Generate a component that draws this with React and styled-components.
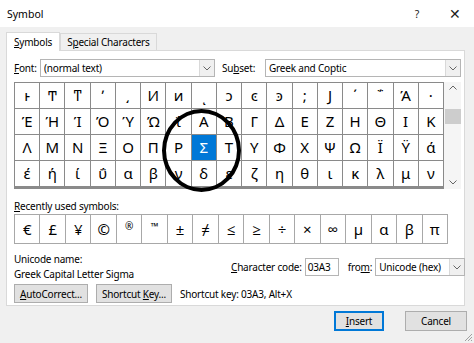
import styled, { createGlobalStyle, css } from "styled-components";

const Global = createGlobalStyle`
  html, body {
    margin: 0;
    padding: 0;
    background: #f0f0f0;
  }
  body {
    font-family: "Noto Sans", "Open Sans", "DejaVu Sans", sans-serif;
    font-size: 10px;
    letter-spacing: -0.2px;
    color: #000;
  }
`;

const Window = styled.div`
  position: relative;
  width: 474px;
  height: 343px;
  overflow: hidden;
  background: #f0f0f0;
  display: flex;
  flex-direction: column;
`;

const TitleBar = styled.div`
  height: 27px;
  background: #fff;
  display: flex;
  align-items: center;
  padding: 0 0 0 7px;
`;

const Title = styled.div`
  flex: 1;
  font-size: 10.5px;
  letter-spacing: 0;
`;

const TitleButton = styled.div`
  width: 38px;
  text-align: center;
  font-size: ${(p) => (p.$big ? "14px" : "10.5px")};
  font-weight: ${(p) => (p.$big ? 300 : 400)};
  color: #222;
`;

const Body = styled.div`
  padding: 5px 0 0 6px;
  display: flex;
  flex-direction: column;
`;

const Tabs = styled.div`
  display: flex;
  height: 18px;
  align-items: flex-end;
`;

const Tab = styled.div`
  box-sizing: border-box;
  height: ${(p) => (p.$active ? "19px" : "17px")};
  padding: 0 ${(p) => (p.$active ? 7 : 6)}px;
  display: flex;
  align-items: center;
  border: 1px solid #d9d9d9;
  border-bottom: none;
  background: ${(p) => (p.$active ? "#fff" : "#f0f0f0")};
  margin-bottom: ${(p) => (p.$active ? "-1px" : "0")};
  position: relative;
  z-index: ${(p) => (p.$active ? 1 : 0)};
`;

const Panel = styled.div`
  box-sizing: border-box;
  width: 459px;
  height: 256px;
  background: #fff;
  border: 1px solid #d9d9d9;
  padding: 8px 3px 0 7px;
  display: flex;
  flex-direction: column;
`;

const Row = styled.div`
  display: flex;
  align-items: center;
`;

const Label = styled.span`
  white-space: nowrap;
  box-sizing: border-box;
  width: ${(p) => (p.$w ? `${p.$w}px` : "auto")};
  padding-left: ${(p) => p.$pl || 0}px;
  flex: none;
`;

const Key = styled.span`
  text-decoration: underline;
`;

const Combo = styled.div`
  box-sizing: border-box;
  height: 18px;
  width: ${(p) => p.$w}px;
  border: 1px solid #b5b5b5;
  background: #fff;
  display: flex;
  align-items: center;
  padding-left: 3px;
  flex: none;
`;

const ComboText = styled.span`
  flex: 1;
  white-space: nowrap;
  overflow: hidden;
`;

const ComboButton = styled.div`
  width: 14px;
  height: 16px;
  border-left: 1px solid #d9d9d9;
  background: #f0f0f0;
  display: flex;
  align-items: center;
  justify-content: center;
`;

const GridArea = styled.div`
  position: relative;
  display: flex;
  margin-top: 5px;
`;

const CharGrid = styled.div`
  display: grid;
  grid-template-columns: repeat(17, 1fr);
  grid-auto-rows: ${(p) => p.$row}px;
  gap: 1px;
  width: ${(p) => p.$w}px;
  box-sizing: border-box;
  background: ${(p) => p.$line};
  border: 1px solid ${(p) => p.$line};
  letter-spacing: 0;
  ${(p) =>
    p.$double &&
    css`
      border-bottom: 3px double #8a8a8a;
    `}
`;

const Cell = styled.div`
  background: ${(p) => (p.$sel ? "#0078d7" : "#fff")};
  color: ${(p) => (p.$sel ? "#fff" : "#000")};
  display: flex;
  align-items: center;
  justify-content: center;
  font-size: ${(p) => p.$size || 15}px;
  line-height: 1;
  padding-bottom: ${(p) => (p.$raise ? 6 : 0)}px;
`;

const Scrollbar = styled.div`
  width: 17px;
  background: #f5f5f5;
  display: flex;
  flex-direction: column;
  align-items: center;
  padding: 3px 0 4px;
  box-sizing: border-box;
`;

const Thumb = styled.div`
  width: 16px;
  height: 15px;
  background: #cdcdcd;
  margin-top: 19px;
  margin-bottom: auto;
`;

const Circle = styled.div`
  position: absolute;
  left: 148px;
  top: 27px;
  width: 79px;
  height: 83px;
  box-sizing: border-box;
  border: 4px solid #000;
  border-radius: 50%;
  pointer-events: none;
`;

const SectionLabel = styled.div`
  margin-top: ${(p) => p.$mt || 0}px;
  margin-bottom: ${(p) => p.$mb || 0}px;
  line-height: 14px;
  white-space: nowrap;
`;

const InfoRow = styled.div`
  display: flex;
  margin-top: 8px;
`;

const InfoLeft = styled.div`
  width: 217px;
  flex: none;
  display: flex;
  flex-direction: column;
  gap: 1px;
`;

const InfoRight = styled.div`
  display: flex;
  align-items: center;
  gap: 3px;
  padding-top: 6px;
  height: 18px;
`;

const CodeBox = styled.div`
  box-sizing: border-box;
  width: 34px;
  height: 18px;
  border: 1px solid #b5b5b5;
  padding-left: 2px;
  display: flex;
  align-items: center;
  margin-right: 6px;
`;

const Button = styled.div`
  box-sizing: border-box;
  width: ${(p) => p.$w}px;
  height: ${(p) => p.$h || 19}px;
  background: #e1e1e1;
  border: 1px solid ${(p) => (p.$default ? "#0078d7" : "#adadad")};
  box-shadow: ${(p) => (p.$default ? "inset 0 0 0 1px #0078d7" : "none")};
  display: flex;
  align-items: center;
  justify-content: center;
  white-space: nowrap;
  flex: none;
`;

const ButtonRow = styled.div`
  display: flex;
  align-items: center;
  gap: 8px;
  margin-top: 3px;
`;

const Footer = styled.div`
  display: flex;
  justify-content: flex-end;
  gap: 21px;
  padding-right: 7px;
  margin-top: 5px;
`;

const Grip = styled.svg`
  position: absolute;
  right: 1px;
  bottom: 1px;
`;

const Chevron = ({ up }) => (
  <svg width="8" height="5" viewBox="0 0 8 5">
    <path
      d={up ? "M0.5 4.5 L4 1 L7.5 4.5" : "M0.5 0.5 L4 4 L7.5 0.5"}
      fill="none"
      stroke="#666"
      strokeWidth="1"
    />
  </svg>
);

const rows = [
  "ͱͲͳʹ͵Ͷͷͺͻͼͽ;Ϳ΄΅Ά·",
  "ΈΉΊΌΎΏΐΑΒΓΔΕΖΗΘΙΚ",
  "ΛΜΝΞΟΠΡΣΤΥΦΧΨΩΪΫά",
  "έήίΰαβγδεζηθικλμν",
];

const recent = ["€", "£", "¥", "©", "®", "™", "±", "≠", "≤", "≥", "÷", "×", "∞", "µ", "α", "β", "π"];

export default function App() {
  return (
    <Window>
      <Global />
      <TitleBar>
        <Title>Symbol</Title>
        <TitleButton>?</TitleButton>
        <TitleButton $big>✕</TitleButton>
      </TitleBar>
      <Body>
        <Tabs>
          <Tab $active>
            <span>
              <Key>S</Key>ymbols
            </span>
          </Tab>
          <Tab>
            <span>
              S<Key>p</Key>ecial Characters
            </span>
          </Tab>
        </Tabs>
        <Panel>
          <Row>
            <Label $w={26}>
              <Key>F</Key>ont:
            </Label>
            <Combo $w={175}>
              <ComboText>(normal text)</ComboText>
              <ComboButton>
                <Chevron />
              </ComboButton>
            </Combo>
            <Label $w={50} $pl={7}>
              Su<Key>b</Key>set:
            </Label>
            <Combo $w={196}>
              <ComboText>Greek and Coptic</ComboText>
              <ComboButton>
                <Chevron />
              </ComboButton>
            </Combo>
          </Row>
          <GridArea>
            <CharGrid $w={430} $row={25} $line="#8a8a8a" $double>
              {rows.map((r, ri) =>
                Array.from(r).map((ch, ci) => (
                  <Cell key={`${ri}-${ci}`} $sel={ri === 2 && ci === 7}>
                    {ch}
                  </Cell>
                ))
              )}
            </CharGrid>
            <Scrollbar>
              <Chevron up />
              <Thumb />
              <Chevron />
            </Scrollbar>
            <Circle />
          </GridArea>
          <SectionLabel $mt={10} $mb={1}>
            <Key>R</Key>ecently used symbols:
          </SectionLabel>
          <CharGrid $w={434} $row={28} $line="#a8a8a8">
            {recent.map((ch, i) => {
              const small = ch === "®" || ch === "™";
              return (
                <Cell key={i} $size={small ? 10 : 15} $raise={small}>
                  {ch}
                </Cell>
              );
            })}
          </CharGrid>
          <InfoRow>
            <InfoLeft>
              <SectionLabel>Unicode name:</SectionLabel>
              <SectionLabel>Greek Capital Letter Sigma</SectionLabel>
            </InfoLeft>
            <InfoRight>
              <Label>
                <Key>C</Key>haracter code:
              </Label>
              <CodeBox>03A3</CodeBox>
              <Label>
                fro<Key>m</Key>:
              </Label>
              <Combo $w={90}>
                <ComboText>Unicode (hex)</ComboText>
                <ComboButton>
                  <Chevron />
                </ComboButton>
              </Combo>
            </InfoRight>
          </InfoRow>
          <ButtonRow>
            <Button $w={74}>
              <span>
                <Key>A</Key>utoCorrect...
              </span>
            </Button>
            <Button $w={76}>
              <span>
                Shortcut <Key>K</Key>ey...
              </span>
            </Button>
            <Label>Shortcut key: 03A3, Alt+X</Label>
          </ButtonRow>
        </Panel>
        <Footer>
          <Button $w={50} $h={20} $default>
            <span>
              <Key>I</Key>nsert
            </span>
          </Button>
          <Button $w={62} $h={20}>
            Cancel
          </Button>
        </Footer>
      </Body>
      <Grip width="10" height="10" viewBox="0 0 10 10">
        <path d="M9 2 L2 9 M9 5 L5 9 M9 8 L8 9" stroke="#a0a0a0" strokeWidth="1" />
      </Grip>
    </Window>
  );
}
